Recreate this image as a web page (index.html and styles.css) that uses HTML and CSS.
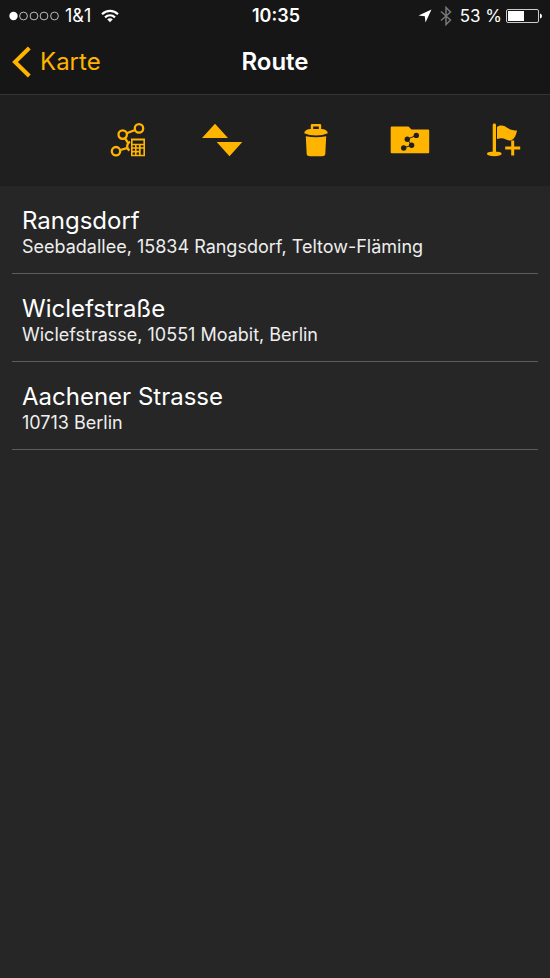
FILE: index.html
```html
<!DOCTYPE html>
<html lang="de">
<head>
<meta charset="utf-8">
<meta name="viewport" content="width=device-width, initial-scale=1">
<title>Route</title>
<link rel="stylesheet" href="styles.css">
</head>
<body>
<header class="top">
  <div class="status">
    <div class="status-left">
      <svg class="signal" width="50" height="10" viewBox="0 0 50 10" aria-hidden="true">
        <circle cx="4.5" cy="5" r="4.2" fill="#fff"/>
        <g fill="none" stroke="#bbb" stroke-width="1"><circle cx="14.5" cy="5" r="3.9"/><circle cx="25" cy="5" r="3.9"/><circle cx="35" cy="5" r="3.9"/><circle cx="45.5" cy="5" r="3.9"/></g>
      </svg>
      <span class="carrier">1&amp;1</span>
      <svg width="18" height="14" viewBox="0 0 18 14" aria-hidden="true">
        <g fill="none" stroke="#fff" stroke-width="2.2"><path d="M1 5.2C5.6.7 12.4.7 17 5.2"/><path d="M4 8.4C6.9 5.7 11.1 5.7 14 8.4"/></g>
        <path d="M6.2 10.3C7.8 8.9 10.2 8.9 11.8 10.3L9 13.3Z" fill="#fff"/>
      </svg>
    </div>
    <time class="clock">10:35</time>
    <div class="status-right">
      <svg width="14" height="14" viewBox="0 0 14 14" aria-hidden="true"><path d="M13.5.5L7.5 13.5 6.8 7.2.5 6.5Z" fill="#fff"/></svg>
      <svg class="bluetooth" width="12" height="20" viewBox="0 0 12 20" aria-hidden="true"><path d="M1 5.5L10.5 14 6 18.5V1.5L10.5 6 1 14.5" fill="none" stroke="#777" stroke-width="1.5"/></svg>
      <span class="percent">53 %</span>
      <svg width="37" height="14" viewBox="0 0 37 14" aria-hidden="true">
        <rect x=".5" y=".5" width="32" height="13" rx="1.5" fill="none" stroke="#ccc"/>
        <path d="M2 2H18V12H2Z" fill="#fff"/><path d="M34 4.5Q36 5 36 7T34 9.5Z" fill="#fff"/>
      </svg>
    </div>
  </div>
  <nav class="navbar">
    <a class="back" href="#karte">
      <svg width="20" height="32" viewBox="0 0 20 32" aria-hidden="true"><path d="M17.3 2L3 16 17.3 30" fill="none" stroke="currentColor" stroke-width="4"/></svg>
      <span>Karte</span>
    </a>
    <h1 class="title">Route</h1>
  </nav>
</header>
<div class="toolbar" role="toolbar" aria-label="Route">
  <button class="tool" type="button" aria-label="Route berechnen">
    <svg viewBox="0 0 48 48"><g fill="none" stroke="currentColor" stroke-width="2.3"><circle cx="36" cy="12.4" r="4.2"/><circle cx="19.7" cy="18.6" r="4.2"/><circle cx="13" cy="35.2" r="4.2"/><path d="M23.7 17.2L32 14M22 22.2L24.7 26.3M17.2 34L24 32.2M27 25.8Q24.4 27 24.2 30T26.5 34.4"/></g>
    <path fill="currentColor" fill-rule="evenodd" d="M28 22.5H42V40.3H28ZM29.6 24.4V27.8H40.4V24.4ZM29.6 29.3V31.3H32V29.3ZM33.6 29.3V31.3H36V29.3ZM37.7 29.3V31.3H40.4V29.3ZM29.6 32.8V34.8H32V32.8ZM33.6 32.8V34.8H36V32.8ZM29.6 36.4V38.7H32V36.4ZM33.6 36.4V38.7H36V36.4ZM37.7 32.8V38.7H40.4V32.8Z"/></svg>
  </button>
  <button class="tool" type="button" aria-label="Sortieren">
    <svg viewBox="0 0 48 48"><path fill="currentColor" d="M5 22L18 7.7 31 22ZM19.7 26H45.3L32.5 40.2Z"/></svg>
  </button>
  <button class="tool" type="button" aria-label="Löschen">
    <svg viewBox="0 0 48 48"><path d="M21 14V9.2H29V14" fill="none" stroke="currentColor" stroke-width="2.4" stroke-linejoin="round"/><path fill="currentColor" d="M13.2 17.2Q13.5 13.2 20 13H30Q36.5 13.2 36.8 17.2 32 19.6 25 19.6T13.2 17.2ZM14.8 20.2Q25 22.4 35.2 20.2L34.3 38Q34 40.2 31 40.2H19Q16 40.2 15.7 38Z"/></svg>
  </button>
  <button class="tool" type="button" aria-label="Routen öffnen">
    <svg viewBox="0 0 48 48"><path fill="currentColor" d="M6.7 10.5H23.5L26.5 13.5H43.2Q44.2 13.5 44.2 14.5V36.3Q44.2 37.3 43.2 37.3H6.7Q5.7 37.3 5.7 36.3V11.5Q5.7 10.5 6.7 10.5Z"/><g fill="#1f1f1f"><circle cx="31.3" cy="19.4" r="2.7"/><circle cx="22.3" cy="23.2" r="2.7"/><circle cx="26.6" cy="29.2" r="2.7"/><circle cx="18.7" cy="32" r="2.7"/></g><path d="M31.3 19.4L22.3 23.2 26.6 29.2 18.7 32" fill="none" stroke="#1f1f1f"/></svg>
  </button>
  <button class="tool" type="button" aria-label="Ziel hinzufügen">
    <svg viewBox="0 0 48 48"><rect x="13.7" y="7.5" width="3.3" height="30" rx="1.4" fill="currentColor"/><ellipse cx="15.3" cy="37.8" rx="7.4" ry="2.4" fill="currentColor"/><path fill="currentColor" d="M18 11C22 8.3 26 10 29 12.3 32 14.2 35 14.5 38 14.5 37 20.5 34 25 30 24.6 26.5 24 25 20.8 18 23Z"/><path d="M33.7 24.5V39.5M26.2 32H41.2" stroke="currentColor" stroke-width="3"/></svg>
  </button>
</div>
<main>
  <ul class="stops">
    <li class="stop"><h2 class="name">Rangsdorf</h2><p class="address">Seebadallee, 15834 Rangsdorf, Teltow-Fläming</p></li>
    <li class="stop"><h2 class="name">Wiclefstraße</h2><p class="address">Wiclefstrasse, 10551 Moabit, Berlin</p></li>
    <li class="stop"><h2 class="name">Aachener Strasse</h2><p class="address">10713 Berlin</p></li>
  </ul>
</main>
</body>
</html>
```
FILE: styles.css
```css
* { box-sizing: border-box; }
body {
  margin: 0;
  min-height: 100vh;
  background: #262626;
  color: #fff;
  font-family: Inter, Roboto, sans-serif;
}
h1, h2, p, ul { margin: 0; padding: 0; font-weight: 400; }
svg { display: block; flex: none; }
.top {
  background: #161616;
  border-bottom: 1px solid #343434;
}
.status, .navbar {
  display: grid;
  grid-template-columns: 1fr auto 1fr;
  align-items: center;
}
.status {
  height: 30px;
  padding: 0 7px 0 9px;
  font-size: 18px;
  line-height: 32px;
}
.status-left, .status-right { display: flex; align-items: center; }
.status-left { gap: 10px; }
.signal { margin-right: -4px; }
.status-right { justify-content: flex-end; gap: 8px; }
.percent { font-size: 17px; margin-right: -4px; }
.clock { font-weight: 600; }
.navbar {
  height: 64px;
  padding: 0 12px;
  font-size: 24px;
  line-height: 32px;
}
.back {
  display: flex;
  align-items: center;
  gap: 8px;
  color: #ffb400;
  text-decoration: none;
}
.title { font-size: 24px; font-weight: 600; }
.toolbar {
  display: flex;
  justify-content: flex-end;
  height: 91px;
  padding-bottom: 2px;
  background: #1f1f1f;
}
.tool {
  display: flex;
  align-items: center;
  justify-content: center;
  width: 94px;
  padding: 0;
  border: 0;
  background: none;
  color: #ffb400;
}
.tool svg { width: 48px; height: 48px; }
.stops { padding: 0 12px; list-style: none; }
.stop {
  min-height: 88px;
  padding: 21px 10px 0;
  border-bottom: 1px solid #5c5c5c;
}
.name { font-size: 24px; line-height: 28px; }
.address { font-size: 18px; line-height: 24px; color: #eee; }
```
